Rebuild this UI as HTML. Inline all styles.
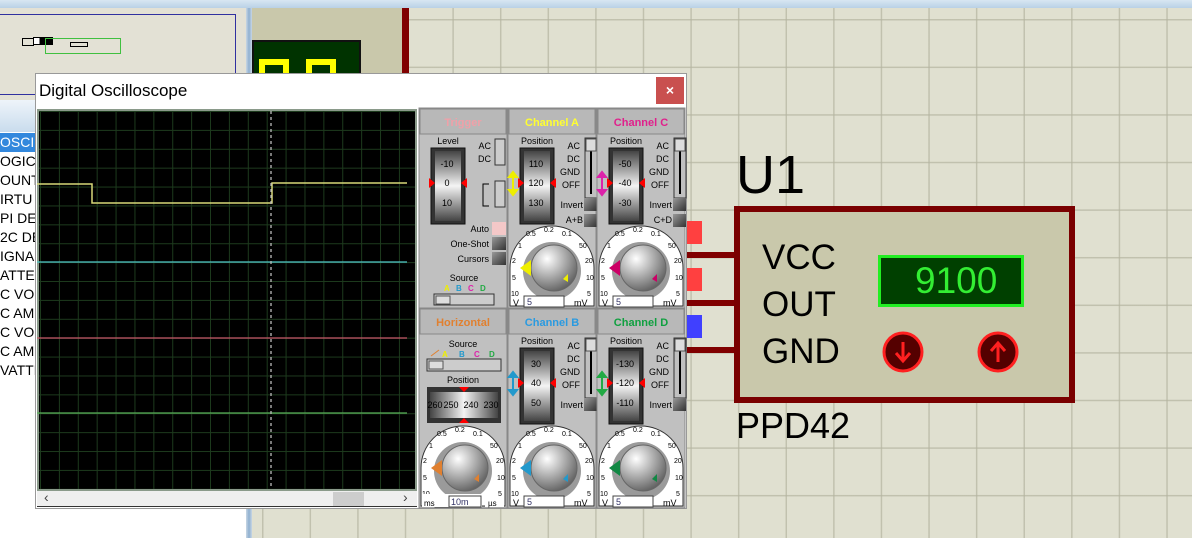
<!DOCTYPE html>
<html><head><meta charset="utf-8"><style>
*{margin:0;padding:0;box-sizing:border-box}
body{width:1192px;height:538px;overflow:hidden;position:relative;font-family:"Liberation Sans",sans-serif;background:#e0dfd0}
.abs{position:absolute}
#canvas{left:252px;top:8px;width:940px;height:530px;background-color:#e0e0d0;
background-image:linear-gradient(90deg,rgba(180,180,160,.7) 1.5px,transparent 1.5px),linear-gradient(rgba(180,180,160,.7) 1.5px,transparent 1.5px);
background-size:47.6px 47.6px;background-position:10px 11px}
.li{position:absolute;left:0;width:36px;height:19px;font-size:14px;line-height:19px;overflow:hidden;white-space:nowrap;color:#000}
</style></head><body>
<div class="abs" style="left:0;top:0;width:1192px;height:8px;background:linear-gradient(#d8e6f2,#b9d1e6)"></div>
<div class="abs" style="left:0;top:8px;width:246px;height:100px;background:#e3e1d5"></div>
<div class="abs" style="left:0;top:14px;width:236px;height:81px;border:1px solid #3030a0;border-left:none"></div>
<div class="abs" style="left:22px;top:38px;width:12px;height:8px;border:1px solid #000;border-right:none"></div>
<div class="abs" style="left:33px;top:37px;width:20px;height:8px;border:1px solid #000;background:linear-gradient(90deg,#fff 30%,#000 30%)"></div>
<div class="abs" style="left:45px;top:38px;width:76px;height:16px;border:1px solid #40c040"></div>
<div class="abs" style="left:70px;top:42px;width:18px;height:5px;border:1px solid #000"></div>
<div class="abs" style="left:246px;top:8px;width:6px;height:530px;background:linear-gradient(90deg,#c8d6e4,#8fb0d0,#c8d6e4)"></div>
<div class="abs" style="left:0;top:100px;width:246px;height:438px;background:#fff"></div>
<div class="abs" style="left:0;top:100px;width:36px;height:32px;background:linear-gradient(#eef4fa,#c9dced)"></div>
<div class="abs" style="left:0;top:133px;width:36px;height:19px;background:#3388dd"></div>
<div class="li" style="top:133px;color:#fff">OSCIL</div>
<div class="li" style="top:152px">OGIC</div>
<div class="li" style="top:171px">OUNT</div>
<div class="li" style="top:190px">IRTU</div>
<div class="li" style="top:209px">PI DE</div>
<div class="li" style="top:228px">2C DE</div>
<div class="li" style="top:247px">IGNA</div>
<div class="li" style="top:266px">ATTE</div>
<div class="li" style="top:285px">C VO</div>
<div class="li" style="top:304px">C AM</div>
<div class="li" style="top:323px">C VO</div>
<div class="li" style="top:342px">C AM</div>
<div class="li" style="top:361px">VATTM</div>

<div id="canvas" class="abs"></div>
<div class="abs" style="left:252px;top:8px;width:150px;height:67px;background:#c9c8ab"></div>
<div class="abs" style="left:402px;top:8px;width:7px;height:67px;background:#800000"></div>
<div class="abs" style="left:252px;top:40px;width:109px;height:35px;background:#003300;border:2px solid #111;border-bottom:none"></div>
<div class="abs" style="left:259px;top:59px;width:30px;height:20px;border:6px solid #ffff00;border-bottom:none"></div>
<div class="abs" style="left:306px;top:59px;width:30px;height:20px;border:6px solid #ffff00;border-bottom:none"></div>

<!-- Component -->
<div class="abs" style="left:736px;top:140px;font-size:54px;line-height:70px">U1</div>
<div class="abs" style="left:686px;top:252px;width:50px;height:6px;background:#800000"></div>
<div class="abs" style="left:686px;top:300px;width:50px;height:6px;background:#800000"></div>
<div class="abs" style="left:686px;top:347px;width:50px;height:6px;background:#800000"></div>
<div class="abs" style="left:686px;top:221px;width:16px;height:23px;background:#ff4040"></div>
<div class="abs" style="left:686px;top:268px;width:16px;height:23px;background:#ff4040"></div>
<div class="abs" style="left:686px;top:315px;width:16px;height:23px;background:#4040ff"></div>
<div class="abs" style="left:734px;top:206px;width:341px;height:197px;background:#c9c8ab;border:6px solid #7a0000"></div>
<div class="abs" style="left:762px;top:238px;font-size:35px;line-height:40px">VCC</div>
<div class="abs" style="left:762px;top:285px;font-size:35px;line-height:40px">OUT</div>
<div class="abs" style="left:762px;top:332px;font-size:35px;line-height:40px">GND</div>
<div class="abs" style="left:878px;top:255px;width:146px;height:52px;background:#004000;border:3px solid #22ee22;color:#33ee33;font-size:37px;line-height:46px;padding-left:34px">9100</div>
<svg class="abs" style="left:880px;top:330px" width="140" height="44">
<circle cx="23" cy="22" r="19" fill="#550000" stroke="#ff2020" stroke-width="3"/>
<path d="M23 12V30M16 23L23 31L30 23" stroke="#ff2020" stroke-width="3" fill="none"/>
<circle cx="118" cy="22" r="19" fill="#550000" stroke="#ff2020" stroke-width="3"/>
<path d="M118 32V14M111 21L118 13L125 21" stroke="#ff2020" stroke-width="3" fill="none"/>
</svg>
<div class="abs" style="left:736px;top:402px;font-size:36px;line-height:48px">PPD42</div>

<!-- Oscilloscope window -->
<div class="abs" style="left:35px;top:73px;width:652px;height:436px;background:#fff;border:1px solid #999"></div>
<div class="abs" style="left:39px;top:79px;font-size:17px;line-height:24px">Digital Oscilloscope</div>
<div class="abs" style="left:656px;top:77px;width:28px;height:27px;background:#c9504f;color:#fff;font-size:14px;font-weight:bold;text-align:center;line-height:27px">×</div>
<div class="abs" style="left:37px;top:109px;width:380px;height:382px;background-color:#000;border:2px solid #8a9a8a;
background-image:linear-gradient(90deg,#1d3a1d 1px,transparent 1px),linear-gradient(#1d3a1d 1px,transparent 1px);background-size:18.9px 18.9px;background-position:1px 0px"></div>
<svg class="abs" style="left:37px;top:109px" width="380" height="382">
<path d="M0 75H55V94H235V74H370" stroke="#d8d878" stroke-width="1.5" fill="none"/>
<line x1="0" y1="153" x2="370" y2="153" stroke="#50c8c8" stroke-width="1.3"/>
<line x1="0" y1="229" x2="370" y2="229" stroke="#c85a6a" stroke-width="1.3"/>
<line x1="0" y1="304" x2="370" y2="304" stroke="#58b058" stroke-width="1.3"/>
<line x1="234" y1="2" x2="234" y2="380" stroke="#bbb" stroke-width="1.3" stroke-dasharray="3,3"/>
</svg>
<div class="abs" style="left:37px;top:491px;width:380px;height:16px;background:#efefef;border-bottom:1px solid #333"></div>
<div class="abs" style="left:44px;top:489px;font-size:14px;color:#444">‹</div>
<div class="abs" style="left:403px;top:489px;font-size:14px;color:#444">›</div>
<div class="abs" style="left:333px;top:492px;width:31px;height:14px;background:#cdcdcd"></div>

<svg class="abs" style="left:418px;top:107px" width="269" height="402" font-family="Liberation Sans,sans-serif">
<defs>
<linearGradient id="rg" x1="0" y1="0" x2="0" y2="1"><stop offset="0" stop-color="#444"/><stop offset=".5" stop-color="#f4f4f4"/><stop offset="1" stop-color="#444"/></linearGradient>
<linearGradient id="rgh" x1="0" y1="0" x2="1" y2="0"><stop offset="0" stop-color="#444"/><stop offset=".5" stop-color="#f4f4f4"/><stop offset="1" stop-color="#444"/></linearGradient>
<radialGradient id="kn" cx=".35" cy=".3" r=".8"><stop offset="0" stop-color="#fff"/><stop offset=".5" stop-color="#aaa"/><stop offset="1" stop-color="#555"/></radialGradient>
<linearGradient id="bt" x1="0" y1="0" x2="1" y2="1"><stop offset="0" stop-color="#999"/><stop offset="1" stop-color="#333"/></linearGradient>
<g id="hdr"><rect x="0" y="0" width="88" height="200" fill="#c0c0c0" stroke="#888"/><rect x="1" y="1" width="86" height="25" fill="#b8b8b8" stroke="#888"/></g>
<g id="vr"><rect x="12" y="40" width="34" height="76" fill="#333" stroke="#111"/><rect x="16" y="43" width="26" height="70" fill="url(#rg)"/><path d="M10 70L16 75L10 80Z M48 70L42 75L48 80Z" fill="red"/></g>
<g id="sw"><text x="72" y="41" font-size="9" text-anchor="end">AC</text><text x="72" y="54" font-size="9" text-anchor="end">DC</text><text x="72" y="67" font-size="9" text-anchor="end">GND</text><text x="72" y="80" font-size="9" text-anchor="end">OFF</text>
<rect x="77" y="30" width="12" height="60" fill="#c0c0c0" stroke="#333"/><line x1="83" y1="40" x2="83" y2="86" stroke="#000" stroke-width="2"/><rect x="78" y="31" width="10" height="12" fill="#ddd" stroke="#555"/>
<text x="75" y="100" font-size="9" text-anchor="end">Invert</text><rect x="76" y="90" width="13" height="13" fill="url(#bt)"/></g>
<g id="dial"><path d="M2 198V160A42 42 0 0 1 86 160V198Z" fill="#fff" stroke="#333"/>
<g font-size="7"><text x="18" y="128">0.5</text><text x="36" y="124">0.2</text><text x="54" y="128">0.1</text><text x="10" y="140">1</text><text x="4" y="155">2</text><text x="4" y="172">5</text><text x="3" y="188">10</text><text x="71" y="140">50</text><text x="77" y="155">20</text><text x="78" y="172">10</text><text x="79" y="188">5</text></g>
<circle cx="44" cy="163" r="29" fill="#9a9a9a"/><circle cx="46" cy="160" r="23" fill="url(#kn)" stroke="#666"/>
<rect x="16" y="188" width="40" height="11" fill="#fff" stroke="#444"/><text x="5" y="198" font-size="9">V</text><text x="19" y="197" font-size="9" fill="#336">5</text><text x="66" y="198" font-size="9">mV</text></g>
</defs>
<!-- Trigger -->
<g transform="translate(1,1)"><use href="#hdr"/><text x="44" y="18" font-size="11" font-weight="bold" fill="#f0a0a8" text-anchor="middle">Trigger</text>
<text x="29" y="36" font-size="9" text-anchor="middle">Level</text><use href="#vr"/>
<g font-size="9" text-anchor="middle"><text x="28" y="59">-10</text><text x="28" y="78">0</text><text x="28" y="98">10</text></g>
<text x="72" y="41" font-size="9" text-anchor="end">AC</text><text x="72" y="54" font-size="9" text-anchor="end">DC</text>
<rect x="76" y="31" width="10" height="26" fill="#ccc" stroke="#333"/><rect x="76" y="73" width="10" height="26" fill="#ccc" stroke="#333"/>
<path d="M64 88V76H70M64 88V98H70" stroke="#000" fill="none"/>
<text x="70" y="124" font-size="9" text-anchor="end">Auto</text><rect x="73" y="114" width="14" height="13" fill="#f4c8c8"/>
<text x="70" y="139" font-size="9" text-anchor="end">One-Shot</text><rect x="73" y="129" width="14" height="13" fill="url(#bt)"/>
<text x="70" y="154" font-size="9" text-anchor="end">Cursors</text><rect x="73" y="144" width="14" height="13" fill="url(#bt)"/>
<text x="45" y="173" font-size="9" text-anchor="middle">Source</text>
<g font-size="8" font-weight="bold"><text x="25" y="183" fill="#ee0">A</text><text x="37" y="183" fill="#29c">B</text><text x="49" y="183" fill="#d2a">C</text><text x="61" y="183" fill="#2a4">D</text></g>
<rect x="15" y="186" width="60" height="11" fill="#ccc" stroke="#333"/><rect x="17" y="188" width="14" height="8" fill="#ddd" stroke="#555"/></g>
<!-- Channel A -->
<g transform="translate(90,1)"><use href="#hdr"/><text x="44" y="18" font-size="11" font-weight="bold" fill="#ffff30" text-anchor="middle">Channel A</text>
<text x="29" y="36" font-size="9" text-anchor="middle">Position</text><use href="#vr"/>
<g font-size="9" text-anchor="middle"><text x="28" y="59">110</text><text x="28" y="78">120</text><text x="28" y="98">130</text></g>
<path d="M5 64L1 69H9ZM5 87L1 82H9ZM5 69V82" fill="#ee0" stroke="#ee0" stroke-width="2"/>
<use href="#sw"/><text x="75" y="115" font-size="9" text-anchor="end">A+B</text><rect x="76" y="106" width="13" height="13" fill="url(#bt)"/>
<use href="#dial"/><path d="M12 160L23 152V168Z" fill="#ee0"/><path d="M55 171L60 166V174Z" fill="#ee0"/></g>
<!-- Channel C -->
<g transform="translate(179,1)"><use href="#hdr"/><text x="44" y="18" font-size="11" font-weight="bold" fill="#e0208c" text-anchor="middle">Channel C</text>
<text x="29" y="36" font-size="9" text-anchor="middle">Position</text><use href="#vr"/>
<g font-size="9" text-anchor="middle"><text x="28" y="59">-50</text><text x="28" y="78">-40</text><text x="28" y="98">-30</text></g>
<path d="M5 64L1 69H9ZM5 87L1 82H9ZM5 69V82" fill="#d2a" stroke="#d2a" stroke-width="2"/>
<use href="#sw"/><text x="75" y="115" font-size="9" text-anchor="end">C+D</text><rect x="76" y="106" width="13" height="13" fill="url(#bt)"/>
<use href="#dial"/><path d="M12 160L23 152V168Z" fill="#c06"/><path d="M55 171L60 166V174Z" fill="#c06"/></g>
<!-- Horizontal -->
<g transform="translate(1,201)"><use href="#hdr"/><text x="44" y="18" font-size="11" font-weight="bold" fill="#e08030" text-anchor="middle">Horizontal</text>
<text x="44" y="39" font-size="9" text-anchor="middle">Source</text>
<g font-size="8" font-weight="bold"><path d="M12 48L20 42" stroke="#e08030"/><text x="23" y="49" fill="#ee0">A</text><text x="40" y="49" fill="#29c">B</text><text x="55" y="49" fill="#d2a">C</text><text x="70" y="49" fill="#2a4">D</text></g>
<rect x="8" y="51" width="74" height="12" fill="#ccc" stroke="#333"/><rect x="10" y="53" width="14" height="8" fill="#ddd" stroke="#555"/>
<text x="44" y="75" font-size="9" text-anchor="middle">Position</text>
<rect x="8" y="79" width="74" height="36" fill="#333"/><rect x="11" y="84" width="68" height="26" fill="url(#rgh)"/>
<g font-size="9" text-anchor="middle"><text x="16" y="100">260</text><text x="32" y="100">250</text><text x="52" y="100">240</text><text x="72" y="100">230</text></g>
<path d="M40 79L45 84L50 79ZM40 115L45 110L50 115Z" fill="red"/>
<use href="#dial"/><rect x="3" y="186" width="60" height="13" fill="#fff"/><rect x="30" y="188" width="32" height="11" fill="#fff" stroke="#444"/>
<text x="32" y="197" font-size="9" fill="#336">10m</text><text x="5" y="198" font-size="8">ms</text><rect x="66" y="188" width="19" height="11" fill="#fff"/><text x="69" y="198" font-size="8">µs</text>
<path d="M12 160L23 152V168Z" fill="#e08030"/><path d="M55 171L60 166V174Z" fill="#e08030"/></g>
<!-- Channel B -->
<g transform="translate(90,201)"><use href="#hdr"/><text x="44" y="18" font-size="11" font-weight="bold" fill="#2a9ae0" text-anchor="middle">Channel B</text>
<text x="29" y="36" font-size="9" text-anchor="middle">Position</text><use href="#vr"/>
<g font-size="9" text-anchor="middle"><text x="28" y="59">30</text><text x="28" y="78">40</text><text x="28" y="98">50</text></g>
<path d="M5 64L1 69H9ZM5 87L1 82H9ZM5 69V82" fill="#29c" stroke="#29c" stroke-width="2"/>
<use href="#sw"/><use href="#dial"/><path d="M12 160L23 152V168Z" fill="#29c"/><path d="M55 171L60 166V174Z" fill="#29c"/></g>
<!-- Channel D -->
<g transform="translate(179,201)"><use href="#hdr"/><text x="44" y="18" font-size="11" font-weight="bold" fill="#10a040" text-anchor="middle">Channel D</text>
<text x="29" y="36" font-size="9" text-anchor="middle">Position</text><use href="#vr"/>
<g font-size="9" text-anchor="middle"><text x="28" y="59">-130</text><text x="28" y="78">-120</text><text x="28" y="98">-110</text></g>
<path d="M5 64L1 69H9ZM5 87L1 82H9ZM5 69V82" fill="#2a4" stroke="#2a4" stroke-width="2"/>
<use href="#sw"/><use href="#dial"/><path d="M12 160L23 152V168Z" fill="#184"/><path d="M55 171L60 166V174Z" fill="#184"/></g>
</svg>
</body></html>
